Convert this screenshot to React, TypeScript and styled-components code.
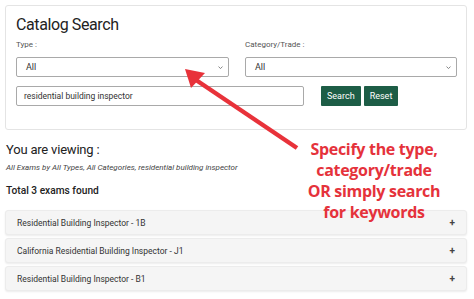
import * as React from 'react';
import styled, { createGlobalStyle } from 'styled-components';

const GlobalStyle = createGlobalStyle`
  html, body {
    margin: 0;
    padding: 0;
    background: #fff;
  }
  body {
    font-family: Roboto, 'Liberation Sans', Arial, sans-serif;
    color: #222;
  }
`;

const exams = [
  'Residential Building Inspector - 1B',
  'California Residential Building Inspector - J1',
  'Residential Building Inspector - B1',
];

const App: React.FC = () => {
  return (
    <Page>
      <GlobalStyle />
      <SearchCard>
        <Title>Catalog Search</Title>
        <FilterGrid>
          <Field>
            <Label>Type :</Label>
            <Select>
              <span>All</span>
              <Chevron />
            </Select>
          </Field>
          <Field>
            <Label>Category/Trade :</Label>
            <Select>
              <span>All</span>
              <Chevron />
            </Select>
          </Field>
        </FilterGrid>
        <SearchRow>
          <TextInput>residential building inspector</TextInput>
          <ButtonGroup>
            <GreenButton>Search</GreenButton>
            <GreenButton>Reset</GreenButton>
          </ButtonGroup>
        </SearchRow>
      </SearchCard>

      <Viewing>You are viewing :</Viewing>
      <Summary>All Exams by All Types, All Categories, residential building inspector</Summary>
      <Total>Total 3 exams found</Total>

      <ExamList>
        {exams.map(name => (
          <ExamRow key={name}>
            <span>{name}</span>
            <Plus>+</Plus>
          </ExamRow>
        ))}
      </ExamList>

      {/* annotation overlay */}
      <ArrowLayer width="474" height="299" viewBox="0 0 474 299">
        <line x1="297" y1="148" x2="196" y2="80" stroke="#e8323a" strokeWidth="4.5" strokeLinecap="butt" />
        <polygon points="185,69 205,73 191,88" fill="#e8323a" />
      </ArrowLayer>
      <Callout>
        Specify the type,
        <br />
        category/trade
        <br />
        OR simply search
        <br />
        for keywords
      </Callout>
    </Page>
  );
};

export default App;

const Chevron: React.FC = () => (
  <svg width="5" height="3" viewBox="0 0 5 3">
    <path d="M0.5 0.6 L2.5 2.5 L4.5 0.6" fill="none" stroke="#666" strokeWidth="0.8" />
  </svg>
);

const Page = styled.div`
  position: relative;
  width: 474px;
  height: 299px;
  padding: 5px 7px 0 5px;
  box-sizing: border-box;
  overflow: hidden;
`;

const SearchCard = styled.section`
  height: 125px;
  box-sizing: border-box;
  border: 1px solid #e4e4e4;
  border-radius: 3px;
  padding: 9px 10px 0 10px;
`;

const Title = styled.h2`
  margin: 0;
  font-size: 16px;
  line-height: 20px;
  letter-spacing: -0.4px;
  font-weight: 400;
  color: #222;
`;

const FilterGrid = styled.div`
  display: grid;
  grid-template-columns: 213px 212px;
  column-gap: 16px;
  margin-top: 5px;
`;

const Field = styled.div`
  display: flex;
  flex-direction: column;
`;

const Label = styled.label`
  font-size: 8px;
  line-height: 10px;
  color: #555;
  margin-bottom: 7px;
`;

const Select = styled.div`
  height: 20px;
  box-sizing: border-box;
  border: 1px solid #a9a9a9;
  border-radius: 2px;
  display: flex;
  align-items: center;
  justify-content: space-between;
  padding: 0 5px 0 9px;
  font-size: 9px;
  color: #333;
`;

const SearchRow = styled.div`
  display: flex;
  align-items: center;
  margin-top: 9px;
`;

const TextInput = styled.div`
  width: 288px;
  height: 20px;
  box-sizing: border-box;
  border: 1px solid #a9a9a9;
  border-radius: 2px;
  display: flex;
  align-items: center;
  padding-left: 7px;
  font-size: 8.5px;
  color: #333;
`;

const ButtonGroup = styled.div`
  display: flex;
  gap: 3px;
  margin-left: 17px;
`;

const GreenButton = styled.button`
  height: 20px;
  padding: 0 6px;
  border: none;
  border-radius: 1px;
  background: #1d5d46;
  color: #fff;
  font-family: Roboto, 'Liberation Sans', Arial, sans-serif;
  font-size: 9px;
  line-height: 20px;
`;

const Viewing = styled.h3`
  margin: 11px 0 0 1px;
  font-size: 13px;
  line-height: 17px;
  letter-spacing: -0.2px;
  font-weight: 400;
  color: #222;
`;

const Summary = styled.p`
  margin: 5px 0 0 1px;
  font-size: 8px;
  line-height: 10px;
  font-style: italic;
  color: #444;
`;

const Total = styled.h4`
  margin: 11px 0 0 1px;
  font-size: 10.2px;
  line-height: 13px;
  font-weight: 500;
  color: #222;
`;

const ExamList = styled.div`
  display: flex;
  flex-direction: column;
  gap: 3px;
  margin-top: 13px;
`;

const ExamRow = styled.div`
  height: 25px;
  box-sizing: border-box;
  background: #f5f5f5;
  border: 1px solid #ececec;
  border-radius: 3px;
  box-shadow: 0 1px 2px rgba(0, 0, 0, 0.08);
  display: flex;
  align-items: center;
  justify-content: space-between;
  padding: 0 11px 0 11px;
  font-size: 8.5px;
  color: #333;
`;

const Plus = styled.span`
  font-size: 10px;
  font-weight: 700;
  color: #444;
`;

const ArrowLayer = styled.svg`
  position: absolute;
  left: 0;
  top: 0;
  pointer-events: none;
`;

const Callout = styled.div`
  position: absolute;
  left: 298px;
  top: 139px;
  width: 152px;
  text-align: center;
  font-family: 'Open Sans', 'Noto Sans', sans-serif;
  font-weight: 700;
  font-size: 16px;
  line-height: 21px;
  letter-spacing: -0.3px;
  color: #e5323b;
`;
